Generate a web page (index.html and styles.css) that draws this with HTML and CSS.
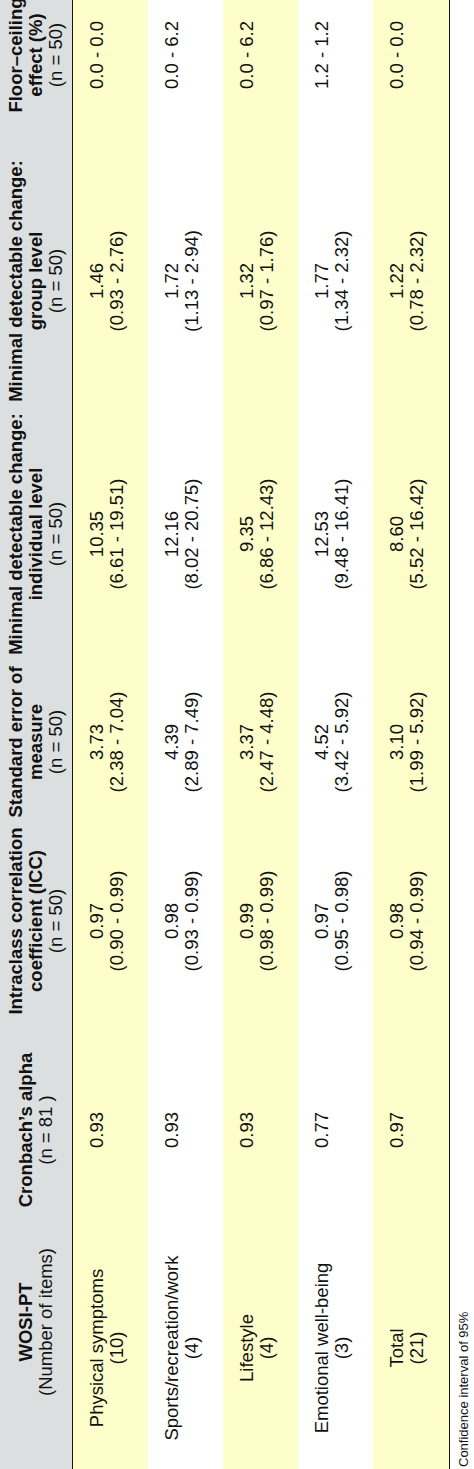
FILE: index.html
```html
<!DOCTYPE html>
<html>
<head>
<meta charset="utf-8">
<link rel="stylesheet" href="styles.css">
</head>
<body>
<div class="page">
  <div class="sheet">
    <div class="row head">
      <div class="cell first-head"><b>WOSI-PT</b><span>(Number of items)</span></div>
      <div class="cell"><b>Cronbach’s alpha</b><span>(n = 81 )</span></div>
      <div class="cell"><b>Intraclass correlation</b><b>coefficient (ICC)</b><span>(n = 50)</span></div>
      <div class="cell"><b>Standard error of</b><b>measure</b><span>(n = 50)</span></div>
      <div class="cell"><b>Minimal detectable change:</b><b>individual level</b><span>(n = 50)</span></div>
      <div class="cell"><b>Minimal detectable change:</b><b>group level</b><span>(n = 50)</span></div>
      <div class="cell"><b>Floor–ceiling</b><b>effect (%)</b><span>(n = 50)</span></div>
    </div>
    <div class="row yellow">
      <div class="cell"><span>Physical symptoms</span><span>(10)</span></div>
      <div class="cell"><span>0.93</span></div>
      <div class="cell"><span>0.97</span><span>(0.90 - 0.99)</span></div>
      <div class="cell"><span>3.73</span><span>(2.38 - 7.04)</span></div>
      <div class="cell"><span>10.35</span><span>(6.61 - 19.51)</span></div>
      <div class="cell"><span>1.46</span><span>(0.93 - 2.76)</span></div>
      <div class="cell"><span>0.0 - 0.0</span></div>
    </div>
    <div class="row">
      <div class="cell"><span>Sports/recreation/work</span><span>(4)</span></div>
      <div class="cell"><span>0.93</span></div>
      <div class="cell"><span>0.98</span><span>(0.93 - 0.99)</span></div>
      <div class="cell"><span>4.39</span><span>(2.89 - 7.49)</span></div>
      <div class="cell"><span>12.16</span><span>(8.02 - 20.75)</span></div>
      <div class="cell"><span>1.72</span><span>(1.13 - 2·94)</span></div>
      <div class="cell"><span>0.0 - 6.2</span></div>
    </div>
    <div class="row yellow">
      <div class="cell"><span>Lifestyle</span><span>(4)</span></div>
      <div class="cell"><span>0.93</span></div>
      <div class="cell"><span>0.99</span><span>(0.98 - 0.99)</span></div>
      <div class="cell"><span>3.37</span><span>(2.47 - 4.48)</span></div>
      <div class="cell"><span>9.35</span><span>(6.86 - 12.43)</span></div>
      <div class="cell"><span>1.32</span><span>(0.97 - 1.76)</span></div>
      <div class="cell"><span>0.0 - 6.2</span></div>
    </div>
    <div class="row">
      <div class="cell"><span>Emotional well-being</span><span>(3)</span></div>
      <div class="cell"><span>0.77</span></div>
      <div class="cell"><span>0.97</span><span>(0.95 - 0.98)</span></div>
      <div class="cell"><span>4.52</span><span>(3.42 - 5.92)</span></div>
      <div class="cell"><span>12.53</span><span>(9.48 - 16.41)</span></div>
      <div class="cell"><span>1.77</span><span>(1.34 - 2.32)</span></div>
      <div class="cell"><span>1.2 - 1.2</span></div>
    </div>
    <div class="row yellow last">
      <div class="cell"><span>Total</span><span>(21)</span></div>
      <div class="cell"><span>0.97</span></div>
      <div class="cell"><span>0.98</span><span>(0.94 - 0.99)</span></div>
      <div class="cell"><span>3.10</span><span>(1.99 - 5.92)</span></div>
      <div class="cell"><span>8.60</span><span>(5.52 - 16.42)</span></div>
      <div class="cell"><span>1.22</span><span>(0.78 - 2.32)</span></div>
      <div class="cell"><span>0.0 - 0.0</span></div>
    </div>
    <div class="foot">Confidence interval of 95%</div>
  </div>
</div>
</body>
</html>
```

FILE: styles.css
```css
html, body {
  margin: 0;
  padding: 0;
  background: #ffffff;
}

.page {
  width: 474px;
  height: 1469px;
  overflow: hidden;
  background: #ffffff;
}

.sheet {
  width: 1528px;
  height: 474px;
  transform-origin: 0 0;
  transform: translateY(1469px) rotate(-90deg);
  font-family: "Liberation Sans", Arial, sans-serif;
  font-size: 18.5px;
  line-height: 20px;
  color: #111111;
}

.row {
  display: grid;
  grid-template-columns: 242px 194px 224px 134px 282px 224px 228px;
  height: 75px;
  background: #ffffff;
}

.row.yellow {
  background: #fefeca;
}

.row.head {
  height: 72px;
  background: #dcdfe0;
  border-bottom: 1px solid #161616;
}

.row.last {
  height: 76px;
  border-bottom: 1px solid #161616;
}

.cell {
  display: flex;
  flex-direction: column;
  align-items: center;
  white-space: nowrap;
  padding-top: 14px;
  min-width: 0;
}

.head .cell {
  justify-content: center;
  padding-top: 0;
}

.head .first-head {
  padding-left: 52px;
}

.cell b {
  font-weight: bold;
}

.foot {
  font-size: 13px;
  line-height: 15px;
  padding: 6px 0 0 2px;
}
```
